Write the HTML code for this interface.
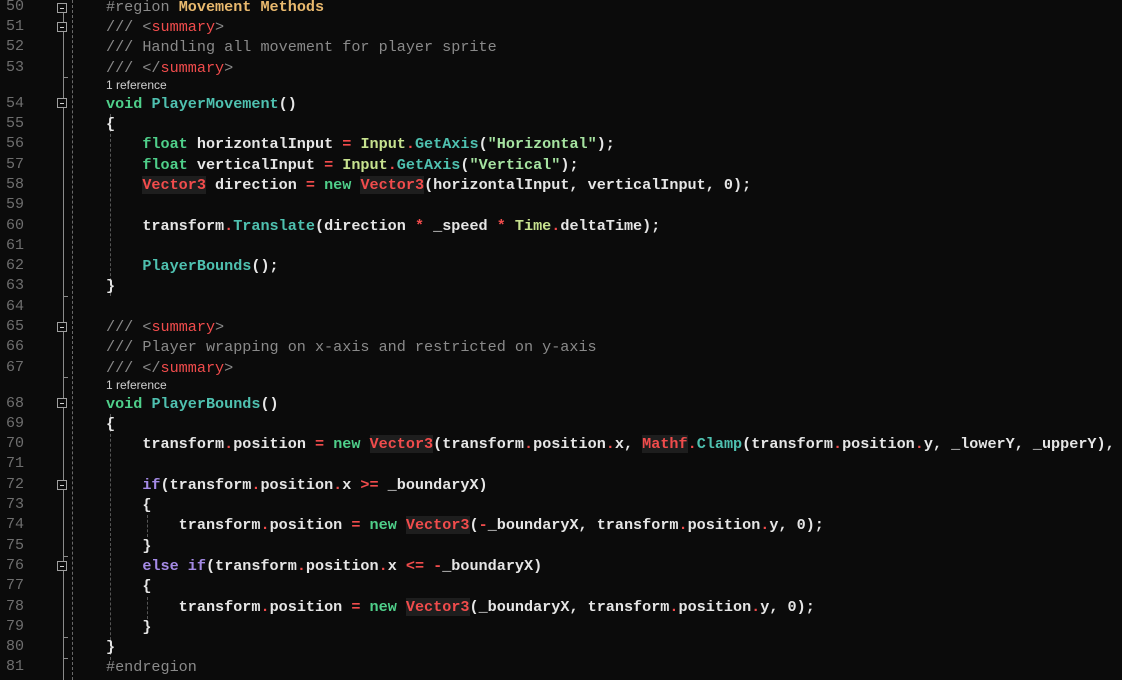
<!DOCTYPE html>
<html><head><meta charset="utf-8"><style>
html,body{margin:0;padding:0;background:#0b0b0b;width:1122px;height:680px;overflow:hidden}
body{position:relative;font-family:"Liberation Mono","DejaVu Sans Mono",monospace;}
#code{position:absolute;left:106px;top:-3.15px;font-size:15.15px;font-weight:bold;color:#e6e6e6}
.l{height:20.3px;line-height:20.3px;white-space:pre}
.r{height:15.7px;line-height:15.7px;font-family:"Liberation Sans",sans-serif;font-weight:normal;font-size:12px;color:#cfcfcf;white-space:pre}
#nums{position:absolute;left:0;width:24px;top:-3.15px;font-size:15px;color:#6f6f6f;text-align:right}
.c{color:#8a8a8a;font-weight:normal}
.x{color:#f14c4c;font-weight:normal}
.rg{color:#e9b96e}
.k{color:#4fcf8a}
.m{color:#4fc1b0}
.t{color:#c7e28f}
.s{color:#a6e3a1}
.o{color:#f14c4c}
.ty{color:#f14c4c;background:#1e1e1e}
.p{color:#a58be6}
.box{position:absolute;left:57px;width:8px;height:8px;border:1px solid #a0a0a0;background:#0b0b0b}
.box::after{content:"";position:absolute;left:2px;right:2px;top:3.5px;height:1px;background:#d0d0d0}
.tick{position:absolute;left:63px;width:5px;height:1px;background:#8a8a8a}
.g{position:absolute;width:0;border-left:1px dashed #555}
</style></head><body>
<div style="position:absolute;left:63px;top:8px;width:1px;height:680px;background:#8a8a8a"></div>
<div class="g" style="left:72px;top:0;height:680px;border-color:#6a6a6a"></div>
<div class="g" style="left:110px;top:114px;height:182px"></div>
<div class="g" style="left:110px;top:414px;height:246px"></div>
<div class="g" style="left:147px;top:515px;height:22px"></div>
<div class="g" style="left:147px;top:597px;height:22px"></div>
<div class="box" style="top:3px"></div>
<div class="box" style="top:22px"></div>
<div class="box" style="top:98px"></div>
<div class="box" style="top:322px"></div>
<div class="box" style="top:398px"></div>
<div class="box" style="top:480px"></div>
<div class="box" style="top:561px"></div>
<div class="tick" style="top:77px"></div>
<div class="tick" style="top:296px"></div>
<div class="tick" style="top:377px"></div>
<div class="tick" style="top:556px"></div>
<div class="tick" style="top:637px"></div>
<div class="tick" style="top:658px"></div>
<div id="nums">
<div class="l">50</div><div class="l">51</div><div class="l">52</div><div class="l">53</div><div class="r"></div>
<div class="l">54</div><div class="l">55</div><div class="l">56</div><div class="l">57</div><div class="l">58</div><div class="l">59</div><div class="l">60</div><div class="l">61</div><div class="l">62</div><div class="l">63</div><div class="l">64</div><div class="l">65</div><div class="l">66</div><div class="l">67</div><div class="r"></div>
<div class="l">68</div><div class="l">69</div><div class="l">70</div><div class="l">71</div><div class="l">72</div><div class="l">73</div><div class="l">74</div><div class="l">75</div><div class="l">76</div><div class="l">77</div><div class="l">78</div><div class="l">79</div><div class="l">80</div><div class="l">81</div>
</div>
<div id="code">
<div class="l"><span class="c">#region</span> <span class="rg">Movement Methods</span></div>
<div class="l"><span class="c">/// &lt;</span><span class="x">summary</span><span class="c">&gt;</span></div>
<div class="l"><span class="c">/// Handling all movement for player sprite</span></div>
<div class="l"><span class="c">/// &lt;/</span><span class="x">summary</span><span class="c">&gt;</span></div>
<div class="r">1 reference</div>
<div class="l"><span class="k">void</span> <span class="m">PlayerMovement</span>()</div>
<div class="l">{</div>
<div class="l">    <span class="k">float</span> horizontalInput <span class="o">=</span> <span class="t">Input</span><span class="o">.</span><span class="m">GetAxis</span>(<span class="s">"Horizontal"</span>);</div>
<div class="l">    <span class="k">float</span> verticalInput <span class="o">=</span> <span class="t">Input</span><span class="o">.</span><span class="m">GetAxis</span>(<span class="s">"Vertical"</span>);</div>
<div class="l">    <span class="ty">Vector3</span> direction <span class="o">=</span> <span class="k">new</span> <span class="ty">Vector3</span>(horizontalInput, verticalInput, 0);</div>
<div class="l"> </div>
<div class="l">    transform<span class="o">.</span><span class="m">Translate</span>(direction <span class="o">*</span> _speed <span class="o">*</span> <span class="t">Time</span><span class="o">.</span>deltaTime);</div>
<div class="l"> </div>
<div class="l">    <span class="m">PlayerBounds</span>();</div>
<div class="l">}</div>
<div class="l"> </div>
<div class="l"><span class="c">/// &lt;</span><span class="x">summary</span><span class="c">&gt;</span></div>
<div class="l"><span class="c">/// Player wrapping on x-axis and restricted on y-axis</span></div>
<div class="l"><span class="c">/// &lt;/</span><span class="x">summary</span><span class="c">&gt;</span></div>
<div class="r">1 reference</div>
<div class="l"><span class="k">void</span> <span class="m">PlayerBounds</span>()</div>
<div class="l">{</div>
<div class="l">    transform<span class="o">.</span>position <span class="o">=</span> <span class="k">new</span> <span class="ty">Vector3</span>(transform<span class="o">.</span>position<span class="o">.</span>x, <span class="ty">Mathf</span><span class="o">.</span><span class="m">Clamp</span>(transform<span class="o">.</span>position<span class="o">.</span>y, _lowerY, _upperY),</div>
<div class="l"> </div>
<div class="l">    <span class="p">if</span>(transform<span class="o">.</span>position<span class="o">.</span>x <span class="o">&gt;=</span> _boundaryX)</div>
<div class="l">    {</div>
<div class="l">        transform<span class="o">.</span>position <span class="o">=</span> <span class="k">new</span> <span class="ty">Vector3</span>(<span class="o">-</span>_boundaryX, transform<span class="o">.</span>position<span class="o">.</span>y, 0);</div>
<div class="l">    }</div>
<div class="l">    <span class="p">else if</span>(transform<span class="o">.</span>position<span class="o">.</span>x <span class="o">&lt;=</span> <span class="o">-</span>_boundaryX)</div>
<div class="l">    {</div>
<div class="l">        transform<span class="o">.</span>position <span class="o">=</span> <span class="k">new</span> <span class="ty">Vector3</span>(_boundaryX, transform<span class="o">.</span>position<span class="o">.</span>y, 0);</div>
<div class="l">    }</div>
<div class="l">}</div>
<div class="l"><span class="c">#endregion</span></div>
</div>
</body></html>
